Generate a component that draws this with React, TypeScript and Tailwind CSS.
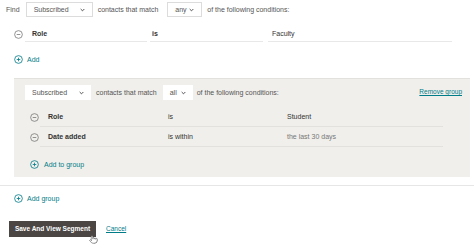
import React from 'react';
import { Pointer } from 'lucide-react';

const MinusCircle = () => (
  <svg width="9" height="9" viewBox="0 0 10 10" className="shrink-0">
    <circle cx="5" cy="5" r="4.3" fill="none" stroke="#7a7a7a" strokeWidth="0.9" />
    <line x1="3" y1="5" x2="7" y2="5" stroke="#7a7a7a" strokeWidth="0.9" />
  </svg>
);

const PlusCircle = () => (
  <svg width="9" height="9" viewBox="0 0 10 10" className="shrink-0">
    <circle cx="5" cy="5" r="4.3" fill="none" stroke="#007c89" strokeWidth="0.9" />
    <line x1="3" y1="5" x2="7" y2="5" stroke="#007c89" strokeWidth="0.9" />
    <line x1="5" y1="3" x2="5" y2="7" stroke="#007c89" strokeWidth="0.9" />
  </svg>
);

const Caret = () => (
  <svg width="5" height="4" viewBox="0 0 6 4" className="shrink-0">
    <path d="M0.8 0.8 L3 3 L5.2 0.8" fill="none" stroke="#444" strokeWidth="1.1" />
  </svg>
);

const Select: React.FC<{ label: string; width: string; bordered?: boolean }> = ({ label, width, bordered = true }) => (
  <div
    className={`${width} h-[15px] bg-white flex items-center justify-between px-[7px] text-[#555] ${
      bordered ? 'border border-[#dcdcdc]' : ''
    }`}
  >
    <span>{label}</span>
    <Caret />
  </div>
);

type Cond = { field: string; op: string; value: string; valueMuted?: boolean };

const ConditionRow: React.FC<{ c: Cond; grouped?: boolean }> = ({ c, grouped }) =>
  grouped ? (
    <div className="flex items-stretch h-[20px] pl-[16px]">
      <div className="flex items-center w-[10px]">
        <MinusCircle />
      </div>
      <div className="flex items-center w-[125px] pl-[8px] border-b border-[#e2e1dd] font-semibold text-[#333]">{c.field}</div>
      <div className="flex items-center w-[117px] pl-[3px] border-b border-[#e2e1dd] text-[#333]">{c.op}</div>
      <div className={`flex items-center w-[161px] pl-[5px] border-b border-[#e2e1dd] ${c.valueMuted ? 'text-[#777]' : 'text-[#333] font-medium'}`}>
        {c.value}
      </div>
    </div>
  ) : (
    <div className="flex items-stretch h-[16px] pl-[14px]">
      <div className="flex items-center w-[11px]">
        <MinusCircle />
      </div>
      <div className="flex items-center w-[122px] pl-[7px] border-b border-[#e8e8e8] font-semibold text-[#333]">{c.field}</div>
      <div className="flex items-center w-[113px] ml-[3px] pl-[2px] border-b border-[#e8e8e8] font-semibold text-[#333]">{c.op}</div>
      <div className="flex items-center w-[184px] ml-[5px] pl-[4px] border-b border-[#e8e8e8] text-[#333]">{c.value}</div>
    </div>
  );

export default function App() {
  return (
    <div
      className="relative w-[474px] h-[245px] bg-white overflow-hidden text-[7px] leading-none text-[#555]"
      style={{ fontFamily: '"Liberation Sans", Arial, sans-serif' }}
    >
      {/* top level match */}
      <div className="flex items-center gap-[5px] pl-[6px] pt-[2px]">
        <span className="mr-[1px]">Find</span>
        <Select label="Subscribed" width="w-[67px]" />
        <span>contacts that match</span>
        <div className="ml-[4px]">
          <Select label="any" width="w-[35px]" />
        </div>
        <span>of the following conditions:</span>
      </div>

      <div className="mt-[9px]">
        <ConditionRow c={{ field: 'Role', op: 'is', value: 'Faculty' }} />
      </div>

      <div className="flex items-center gap-[4px] pl-[14px] mt-[13px] text-[#007c89] font-medium">
        <PlusCircle />
        <span>Add</span>
      </div>

      {/* group */}
      <div className="ml-[14px] mr-[4px] mt-[14px] h-[99px] bg-[#f0efeb] border-t border-[#e2e1dd]">
        <div className="flex items-center pt-[6px] pl-[11px] pr-[8px]">
          <Select label="Subscribed" width="w-[66px]" bordered={false} />
          <span className="ml-[5px]">contacts that match</span>
          <div className="ml-[6px]">
            <Select label="all" width="w-[30px]" bordered={false} />
          </div>
          <span className="ml-[4px]">of the following conditions:</span>
          <a className="ml-auto text-[#007c89] underline text-[6.5px]">Remove group</a>
        </div>

        <div className="mt-[7px]">
          <ConditionRow grouped c={{ field: 'Role', op: 'is', value: 'Student' }} />
          <ConditionRow grouped c={{ field: 'Date added', op: 'is within', value: 'the last 30 days', valueMuted: true }} />
        </div>

        <div className="flex items-center gap-[5px] pl-[16px] mt-[13px] text-[#007c89] font-medium">
          <PlusCircle />
          <span>Add to group</span>
        </div>
      </div>

      <div className="mt-[8px] border-t border-[#e6e6e6]" />

      <div className="flex items-center gap-[4px] pl-[14px] mt-[8px] text-[#007c89] font-medium">
        <PlusCircle />
        <span>Add group</span>
      </div>

      <div className="flex items-center pl-[9px] mt-[18px]">
        <button className="relative w-[87px] h-[16px] bg-[#4b4643] text-white font-bold text-[6.5px] flex items-center justify-center">
          Save And View Segment
          <Pointer className="absolute right-[-2px] bottom-[-7px] text-[#555] fill-white" size={9} strokeWidth={1.6} />
        </button>
        <a className="ml-[10px] text-[#007c89] underline text-[6.5px]">Cancel</a>
      </div>
    </div>
  );
}
